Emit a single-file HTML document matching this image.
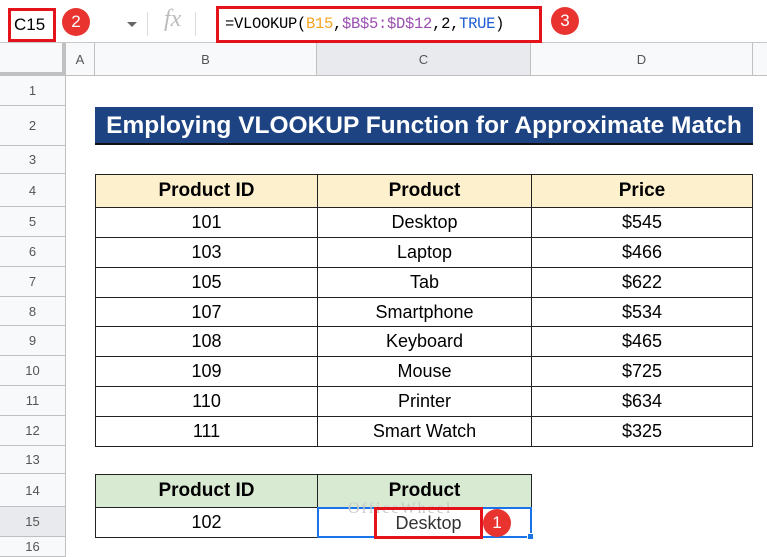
<!DOCTYPE html><html><head><style>
*{margin:0;padding:0;box-sizing:border-box}
body{width:767px;height:548px;overflow:hidden;background:#fff;font-family:"Liberation Sans",Arial,sans-serif;position:relative}
.a{position:absolute}
.rh{position:absolute;left:0;width:66px;background:#f8f9fa;border-bottom:1px solid #c0c0c0;border-right:1px solid #c0c0c0;color:#555;font-size:13px;text-align:center}
.ch{position:absolute;top:43px;height:33px;background:#f8f9fa;border-right:1px solid #c0c0c0;border-bottom:1px solid #c0c0c0;color:#555;font-size:13px;text-align:center;line-height:33px}
.c{position:absolute;border:1px solid #222;text-align:center;font-size:18px;color:#000}
.h{font-weight:bold;font-size:19px}
.badge{position:absolute;width:28px;height:28px;border-radius:50%;background:#e8332f;color:#fff;font-size:17px;text-align:center;line-height:28px}
</style></head><body>
<div class="a" style="left:0;top:0;width:767px;height:43px;background:#fff;border-bottom:1px solid #c8c8c8"></div>
<div class="a" style="left:8px;top:8px;width:48px;height:34px;border:3px solid #e3121b;font-size:17px;line-height:28px;padding-left:3px">C15</div>
<div class="badge" style="left:62px;top:8px">2</div>
<div class="a" style="left:127px;top:22px;width:0;height:0;border-left:5px solid transparent;border-right:5px solid transparent;border-top:5px solid #666"></div>
<div class="a" style="left:147px;top:12px;width:1px;height:24px;background:#ddd"></div>
<div class="a" style="left:164px;top:6px;font-family:'Liberation Serif',serif;font-style:italic;font-size:24px;color:#bbb">fx</div>
<div class="a" style="left:195px;top:12px;width:1px;height:24px;background:#ddd"></div>
<div class="a" style="left:216px;top:6px;width:326px;height:37px;border:3px solid #e3121b;font-family:'Liberation Mono',monospace;font-size:15.5px;line-height:31px;padding-left:6px;white-space:nowrap;letter-spacing:-0.3px">=VLOOKUP(<span style="color:#f5a623">B15</span>,<span style="color:#9b4fb0">$B$5:$D$12</span>,2,<span style="color:#1d5bd6">TRUE</span>)</div>
<div class="badge" style="left:551px;top:7px">3</div>
<div class="a" style="left:0;top:43px;width:66px;height:33px;background:#f8f9fa;border-right:4px solid #c0c0c0;border-bottom:4px solid #c0c0c0"></div>
<div class="ch" style="left:66px;width:29px">A</div>
<div class="ch" style="left:95px;width:222px">B</div>
<div class="ch" style="left:317px;width:214px;background:#e8eaed">C</div>
<div class="ch" style="left:531px;width:222px">D</div>
<div class="ch" style="left:753px;width:14px;border-right:none"></div>
<div class="rh" style="top:76px;height:30px;line-height:30px">1</div>
<div class="rh" style="top:106px;height:40px;line-height:40px">2</div>
<div class="rh" style="top:146px;height:28px;line-height:28px">3</div>
<div class="rh" style="top:174px;height:33px;line-height:33px">4</div>
<div class="rh" style="top:207px;height:30px;line-height:30px">5</div>
<div class="rh" style="top:237px;height:30px;line-height:30px">6</div>
<div class="rh" style="top:267px;height:30px;line-height:30px">7</div>
<div class="rh" style="top:297px;height:29px;line-height:29px">8</div>
<div class="rh" style="top:326px;height:30px;line-height:30px">9</div>
<div class="rh" style="top:356px;height:30px;line-height:30px">10</div>
<div class="rh" style="top:386px;height:30px;line-height:30px">11</div>
<div class="rh" style="top:416px;height:30px;line-height:30px">12</div>
<div class="rh" style="top:446px;height:28px;line-height:28px">13</div>
<div class="rh" style="top:474px;height:33px;line-height:33px">14</div>
<div class="rh" style="top:507px;height:30px;line-height:30px;background:#e8eaed">15</div>
<div class="rh" style="top:537px;height:20px;line-height:20px">16</div>
<div class="a" style="left:95px;top:107px;width:658px;height:38px;background:#1e4382;border-bottom:2px solid #111;color:#fff;font-weight:bold;font-size:24.5px;text-align:center;line-height:37px;white-space:nowrap">Employing VLOOKUP Function for Approximate Match</div>
<div class="c h" style="left:95px;top:174px;width:223px;height:34px;line-height:32px;background:#fdf0cd">Product ID</div>
<div class="c h" style="left:317px;top:174px;width:215px;height:34px;line-height:32px;background:#fdf0cd">Product</div>
<div class="c h" style="left:531px;top:174px;width:222px;height:34px;line-height:32px;background:#fdf0cd">Price</div>
<div class="c" style="left:95px;top:207px;width:223px;height:31px;line-height:29px">101</div><div class="c" style="left:317px;top:207px;width:215px;height:31px;line-height:29px">Desktop</div><div class="c" style="left:531px;top:207px;width:222px;height:31px;line-height:29px">$545</div>
<div class="c" style="left:95px;top:237px;width:223px;height:31px;line-height:29px">103</div><div class="c" style="left:317px;top:237px;width:215px;height:31px;line-height:29px">Laptop</div><div class="c" style="left:531px;top:237px;width:222px;height:31px;line-height:29px">$466</div>
<div class="c" style="left:95px;top:267px;width:223px;height:31px;line-height:29px">105</div><div class="c" style="left:317px;top:267px;width:215px;height:31px;line-height:29px">Tab</div><div class="c" style="left:531px;top:267px;width:222px;height:31px;line-height:29px">$622</div>
<div class="c" style="left:95px;top:297px;width:223px;height:30px;line-height:28px">107</div><div class="c" style="left:317px;top:297px;width:215px;height:30px;line-height:28px">Smartphone</div><div class="c" style="left:531px;top:297px;width:222px;height:30px;line-height:28px">$534</div>
<div class="c" style="left:95px;top:326px;width:223px;height:31px;line-height:29px">108</div><div class="c" style="left:317px;top:326px;width:215px;height:31px;line-height:29px">Keyboard</div><div class="c" style="left:531px;top:326px;width:222px;height:31px;line-height:29px">$465</div>
<div class="c" style="left:95px;top:356px;width:223px;height:31px;line-height:29px">109</div><div class="c" style="left:317px;top:356px;width:215px;height:31px;line-height:29px">Mouse</div><div class="c" style="left:531px;top:356px;width:222px;height:31px;line-height:29px">$725</div>
<div class="c" style="left:95px;top:386px;width:223px;height:31px;line-height:29px">110</div><div class="c" style="left:317px;top:386px;width:215px;height:31px;line-height:29px">Printer</div><div class="c" style="left:531px;top:386px;width:222px;height:31px;line-height:29px">$634</div>
<div class="c" style="left:95px;top:416px;width:223px;height:31px;line-height:29px">111</div><div class="c" style="left:317px;top:416px;width:215px;height:31px;line-height:29px">Smart Watch</div><div class="c" style="left:531px;top:416px;width:222px;height:31px;line-height:29px">$325</div>
<div class="c h" style="left:95px;top:474px;width:223px;height:34px;line-height:32px;background:#d9ead3">Product ID</div>
<div class="c h" style="left:317px;top:474px;width:215px;height:34px;line-height:32px;background:#d9ead3">Product</div>
<div class="c" style="left:95px;top:507px;width:223px;height:31px;line-height:29px">102</div>
<div class="c" style="left:317px;top:507px;width:215px;height:31px;border:2px solid #1a73e8"></div>
<div class="a" style="left:527px;top:533px;width:7px;height:7px;background:#1a73e8;border:1px solid #fff"></div>
<div class="a" style="left:348px;top:500px;font-family:'Liberation Serif',serif;font-size:16px;letter-spacing:2px;color:#c8c8c8">OfficeWheel</div>
<div class="a" style="left:374px;top:507px;width:109px;height:32px;border:3px solid #e3121b;text-align:center;font-size:18px;line-height:26px;color:#333">Desktop</div>
<div class="badge" style="left:483px;top:509px">1</div>
</body></html>
